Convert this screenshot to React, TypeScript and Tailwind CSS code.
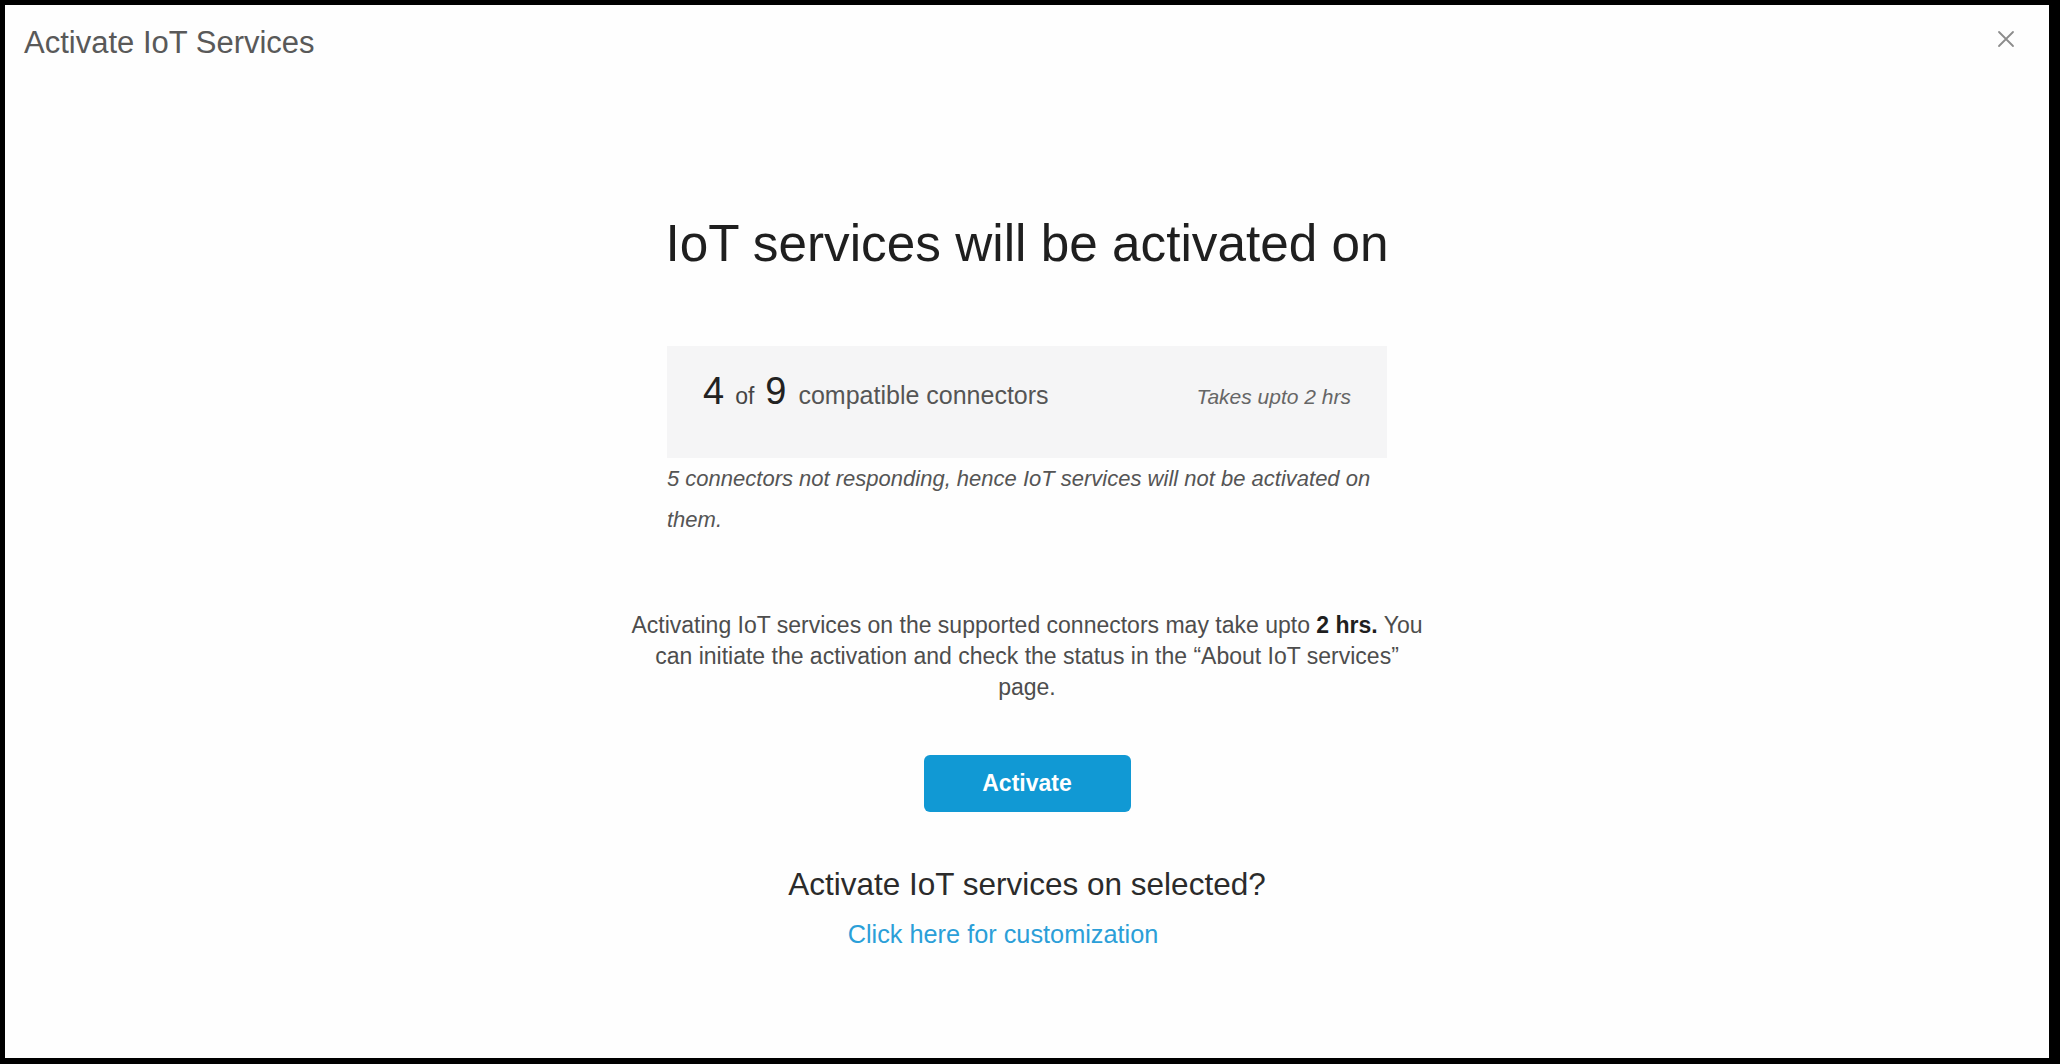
import React from 'react'

const sans = { fontFamily: '"Liberation Sans", Arial, Helvetica, sans-serif' }

function CloseIcon() {
  return (
    <svg width="18" height="18" viewBox="0 0 18 18" className="text-[#8c8c8c]">
      <path d="M2 2 L16 16 M16 2 L2 16" stroke="currentColor" strokeWidth="1.8" strokeLinecap="round" />
    </svg>
  )
}

export default function App() {
  return (
    <main className="h-screen w-full bg-black pt-[5px] pl-[5px] pr-[11px] pb-[6px]" style={sans}>
      <section className="flex h-full flex-col bg-[#fefefe]">
        <header className="flex items-start justify-between pl-[19px] pr-[34px] pt-[18px]">
          <h2 className="text-[31px] leading-[40px] text-[#595959]">Activate IoT Services</h2>
          <button className="mt-[7px]" aria-label="Close">
            <CloseIcon />
          </button>
        </header>

        <div className="flex flex-col items-center">
          <h1 className="mt-[151px] text-[51.3px] leading-[60px] text-[#1f1f1f]">
            IoT services will be activated on
          </h1>

          <div className="mt-[72px] w-[720px]">
            <div className="flex h-[112px] items-start justify-between bg-[#f5f5f6] px-[36px] pt-[25px]">
              <div className="flex items-baseline">
                <span className="text-[38px] leading-[40px] text-[#222]">4</span>
                <span className="ml-[11px] text-[23px] text-[#444]">of</span>
                <span className="ml-[11px] text-[38px] leading-[40px] text-[#222]">9</span>
                <span className="ml-[12px] text-[25px] text-[#555]">compatible connectors</span>
              </div>
              <span className="pt-[10px] text-[21px] italic text-[#666]">Takes upto 2 hrs</span>
            </div>
            <p className="text-[22px] leading-[41px] italic text-[#555]">
              5 connectors not responding, hence IoT services will not be activated on
              <br />
              them.
            </p>
          </div>

          <p className="mt-[70px] whitespace-nowrap text-center text-[23px] leading-[31px] text-[#4d4d4d]">
            Activating IoT services on the supported connectors may take upto{' '}
            <b className="font-bold text-[#1f1f1f]">2 hrs.</b> You
            <br />
            can initiate the activation and check the status in the “About IoT services”
            <br />
            page.
          </p>

          <button className="mt-[52px] h-[57px] w-[207px] rounded-[6px] bg-[#1199d4] text-[23px] font-bold text-white">
            Activate
          </button>

          <p className="mt-[52px] text-[31.5px] leading-[40px] text-[#2b2b2b]">
            Activate IoT services on selected?
          </p>

          <a className="mt-[14px] mr-[48px] text-[25.3px] leading-[32px] text-[#2b9fd8]" href="#">
            Click here for customization
          </a>
        </div>
      </section>
    </main>
  )
}
